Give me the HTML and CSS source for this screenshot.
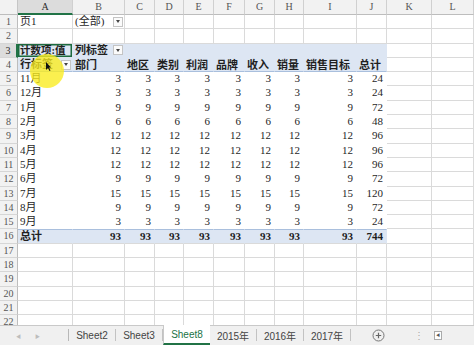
FILE: index.html
```html
<!DOCTYPE html>
<html lang="zh-CN">
<head>
    <meta charset="UTF-8">
    <title>Sheet8 - 数据透视表</title>
    <link rel="stylesheet" href="styles.css">
</head>
<body>
    <div class="window">
        <div class="sheet" id="sheet"></div>

        <div class="tabbar">
            <div class="tab-nav">
                <span class="nav-arrow">&#9664;</span>
                <span class="nav-arrow">&#9654;</span>
            </div>
            <div class="tab">Sheet2</div>
            <div class="tab">Sheet3</div>
            <div class="tab active">Sheet8</div>
            <div class="tab">2015年</div>
            <div class="tab">2016年</div>
            <div class="tab last">2017年</div>
            <div class="tab-add">
                <svg width="13" height="13" viewBox="0 0 13 13">
                    <circle cx="6.5" cy="6.5" r="5.5" fill="none" stroke="#777" stroke-width="1"/>
                    <path d="M6.5 3.8v5.4M3.8 6.5h5.4" stroke="#666" stroke-width="1.2"/>
                </svg>
            </div>
            <div class="tab-dots">&#8942;</div>
            <div class="hscroll">
                <span class="hscroll-btn">&#9664;</span>
            </div>
        </div>

        <div class="cursor-spot">
            <svg class="cursor" width="6" height="9" viewBox="0 0 6 9">
                <path d="M1 0v8l2-2 1.5 3 1-.5L4 5.5h2z" fill="#111"/>
            </svg>
        </div>
    </div>

    <script>
        const letters = ["A", "B", "C", "D", "E", "F", "G", "H", "I", "J", "K", "L"];
        const fields = ["部门", "地区", "类别", "利润", "品牌", "收入", "销量", "销售目标", "总计"];
        const months = [
            ["11月", 3], ["12月", 3], ["1月", 9], ["2月", 6], ["3月", 12], ["4月", 12],
            ["5月", 12], ["6月", 9], ["7月", 15], ["8月", 9], ["9月", 3]
        ];

        const sheet = document.getElementById("sheet");

        function addCell(html, cls) {
            const div = document.createElement("div");
            div.className = "cell " + (cls || "");
            div.innerHTML = html;
            sheet.appendChild(div);
        }

        const dropdown = '<span class="dd"></span>';

        // column header row
        addCell("", "corner");
        letters.forEach(function(l, i) {
            addCell(l, "col-head" + (i === 0 ? " picked" : ""));
        });

        for (let r = 1; r <= 22; r++) {
            addCell(r, "row-head" + (r === 3 ? " picked" : ""));

            for (let c = 0; c < 12; c++) {
                let text = "";
                let cls = "";
                const inPivot = r >= 3 && r <= 16 && c <= 9;

                if (r === 1 && c === 0) text = "页1";
                if (r === 1 && c === 1) { text = "<span>(全部)</span>" + dropdown; cls = "with-dd"; }

                if (inPivot) {
                    cls += " pv";
                    if (r === 3) {
                        cls += " band";
                        if (c === 0) { text = "计数项:值"; cls += " bold selected"; }
                        if (c === 1) { text = "<span>列标签</span>" + dropdown; cls += " bold with-dd"; }
                    } else if (r === 4) {
                        cls += " band band-end bold";
                        if (c === 0) { text = "<span>行标签</span>" + dropdown; cls += " with-dd"; }
                        else text = fields[c - 1];
                    } else if (r === 16) {
                        cls += " band total bold";
                        if (c === 0) text = "总计";
                        else { text = c === 9 ? 744 : 93; cls += " num"; }
                    } else {
                        const m = months[r - 5];
                        if (c === 0) text = m[0];
                        else { text = c === 9 ? m[1] * 8 : m[1]; cls += " num"; }
                    }
                }

                addCell(text, cls);
            }
        }
    </script>
</body>
</html>
```

FILE: styles.css
```css
* {
    box-sizing: border-box;
}

body {
    margin: 0;
    background-color: #ffffff;
    font-family: "Liberation Serif", "Noto Sans CJK SC", serif;
    color: #1f1f1f;
}

.window {
    position: relative;
    width: 474px;
    height: 345px;
    overflow: hidden;
}

.sheet {
    display: grid;
    grid-template-columns: 18px 55px 52px 30px 29px 30px 31px 30px 29px 53px 30px 45px 42px;
    grid-template-rows: 15px repeat(22, 14.3px);
    height: 325px;
    overflow: hidden;
}

.cell {
    border-right: 1px solid #dadada;
    border-bottom: 1px solid #dadada;
    font-size: 11px;
    line-height: 13px;
    padding: 0 2px;
    white-space: nowrap;
    overflow: hidden;
}

.corner {
    background-color: #f2f2f2;
    border-right: 1px solid #c6c6c6;
    border-bottom: 1px solid #bdbdbd;
}

.col-head {
    background-color: #f2f2f2;
    border-bottom: 1px solid #bdbdbd;
    border-right: 1px solid #d0d0d0;
    color: #555;
    font-size: 10px;
    line-height: 14px;
    text-align: center;
}

.row-head {
    background-color: #f2f2f2;
    border-right: 1px solid #bdbdbd;
    border-bottom: 1px solid #d6d6d6;
    color: #555;
    font-size: 10px;
    line-height: 13px;
    text-align: center;
    padding: 0;
}

.col-head.picked,
.row-head.picked {
    background-color: #dcdcdc;
    color: #2b2b2b;
}

.col-head.picked {
    border-bottom: 2px solid #217346;
}

.row-head.picked {
    border-right: 2px solid #217346;
}

/* pivot table area */
.pv {
    border-color: transparent;
    background-color: #ffffff;
}

.band {
    background-color: #dde6f3;
}

.band-end {
    border-bottom: 1px solid #a9bfdd;
    line-height: 15px;
}

.total {
    border-top: 1px solid #a9bfdd;
    border-bottom: 1px solid #dadada;
    line-height: 13px;
}

.bold {
    font-weight: bold;
}

.num {
    text-align: right;
    padding-right: 3px;
}

.selected {
    box-shadow: inset 0 0 0 1.5px #1d6b3f;
    font-size: 10.5px;
    padding: 0 1px 0 2px;
}

.with-dd {
    display: flex;
    justify-content: space-between;
    align-items: center;
    padding-right: 1px;
}

.dd {
    width: 10px;
    height: 10px;
    border: 1px solid #c4c4c4;
    background-color: #fbfbfb;
    display: flex;
    align-items: center;
    justify-content: center;
    flex-shrink: 0;
}

.dd::after {
    content: "";
    border-left: 2.5px solid transparent;
    border-right: 2.5px solid transparent;
    border-top: 3px solid #444;
}

/* sheet tabs */
.tabbar {
    display: flex;
    align-items: stretch;
    height: 20px;
    background-color: #f0f0f0;
    border-top: 1px solid #c9c9c9;
    font-family: "Liberation Sans", "Noto Sans CJK SC", sans-serif;
    font-size: 10px;
    color: #444;
}

.tab-nav {
    width: 69px;
    display: flex;
    align-items: center;
    gap: 14px;
    padding-left: 16px;
    border-right: 1px solid #b8b8b8;
    margin: 3px 0 4px;
}

.nav-arrow {
    font-size: 5px;
    color: #bdbdbd;
}

.tab {
    width: 47px;
    display: flex;
    align-items: center;
    justify-content: center;
    border-right: 1px solid #c2c2c2;
    margin: 3px 0 4px;
}

.tab.active {
    margin: -1px 0 0;
    background-color: #ffffff;
    color: #217346;
    border-right: none;
    border-left: 1px solid #c9c9c9;
    border-bottom: 2px solid #217346;
    padding-top: 1px;
}

.tab-add {
    width: 55px;
    display: flex;
    align-items: center;
    justify-content: center;
}

.tab-dots {
    width: 26px;
    display: flex;
    align-items: center;
    justify-content: center;
    color: #aaa;
    font-size: 10px;
}

.hscroll {
    flex: 1;
    display: flex;
    align-items: center;
    padding-left: 2px;
}

.hscroll-btn {
    width: 8px;
    height: 9px;
    border: 1px solid #aaa;
    background-color: #fff;
    font-size: 4px;
    line-height: 7px;
    text-align: center;
    color: #555;
}

/* screen recorder cursor highlight */
.cursor-spot {
    position: absolute;
    left: 30px;
    top: 54px;
    width: 34px;
    height: 34px;
    border-radius: 50%;
    background-color: rgba(250, 236, 30, 0.78);
}

.cursor {
    position: absolute;
    left: 15px;
    top: 8px;
}
```
